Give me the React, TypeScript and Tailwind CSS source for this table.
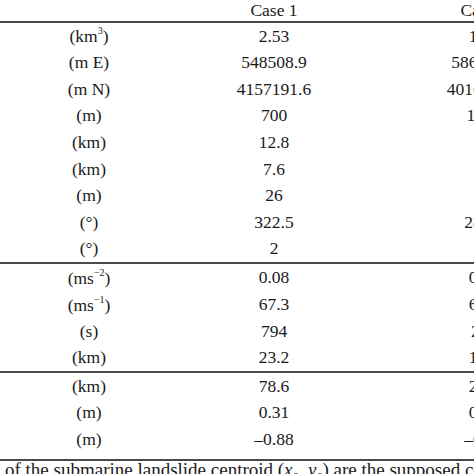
import React from "react";

type Row = { unit: React.ReactNode; a: string; b: string };

const sup = (s: string) => (
  <sup className="text-[10px] relative -top-[1px] align-super leading-none">{s}</sup>
);

const geometry: Row[] = [
  { unit: <>(km{sup("3")})</>, a: "2.53", b: "1.52" },
  { unit: "(m E)", a: "548508.9", b: "586412.5" },
  { unit: "(m N)", a: "4157191.6", b: "4016958.3" },
  { unit: "(m)", a: "700", b: "1000" },
  { unit: "(km)", a: "12.8", b: "9" },
  { unit: "(km)", a: "7.6", b: "10" },
  { unit: "(m)", a: "26", b: "8" },
  { unit: "(°)", a: "322.5", b: "285.0" },
  { unit: "(°)", a: "2", b: "3" },
];

const motion: Row[] = [
  { unit: <>(ms{sup("−2")})</>, a: "0.08", b: "0.12" },
  { unit: <>(ms{sup("−1")})</>, a: "67.3", b: "61.4" },
  { unit: "(s)", a: "794", b: "255" },
  { unit: "(km)", a: "23.2", b: "15.6" },
];

const wave: Row[] = [
  { unit: "(km)", a: "78.6", b: "29.4" },
  { unit: "(m)", a: "0.31", b: "0.27" },
  { unit: "(m)", a: "–0.88", b: "–0.63" },
];

function TableRow({ row }: { row: Row }) {
  return (
    <div className="flex h-[26.6px] items-center leading-none">
      <div className="w-[178px] shrink-0 text-center">{row.unit}</div>
      <div className="w-[192px] shrink-0 text-center">{row.a}</div>
      <div className="w-[228px] shrink-0 text-center">{row.b}</div>
    </div>
  );
}

const Rule = () => <div className="h-[2px] w-[620px] bg-[#4a4a4a]" />;

export default function App() {
  return (
    <div
      className="w-[474px] h-[474px] overflow-hidden bg-white text-[#1a1a1a] text-[17.5px]"
      style={{ fontFamily: '"Liberation Serif", "Times New Roman", serif' }}
    >
      <div className="w-[620px]">
        <div className="flex h-[21px] items-center leading-none">
          <div className="w-[178px] shrink-0" />
          <div className="w-[192px] shrink-0 text-center">Case 1</div>
          <div className="w-[228px] shrink-0 text-center">Case 2</div>
        </div>
        <Rule />
        <div>
          {geometry.map((r, i) => (
            <TableRow key={i} row={r} />
          ))}
        </div>
        <Rule />
        <div className="pt-[0.5px]">
          {motion.map((r, i) => (
            <TableRow key={i} row={r} />
          ))}
        </div>
        <Rule />
        <div className="pb-[6px]">
          {wave.map((r, i) => (
            <TableRow key={i} row={r} />
          ))}
        </div>
        <Rule />
        <p className="pl-[5px] whitespace-nowrap leading-[18px] text-[19px]">
          of the submarine landslide centroid (<i>x</i>
          <sub className="text-[12px]">
            <i>o</i>
          </sub>
          , <i>y</i>
          <sub className="text-[12px]">
            <i>o</i>
          </sub>
          ) are the supposed coordinates
        </p>
      </div>
    </div>
  );
}
